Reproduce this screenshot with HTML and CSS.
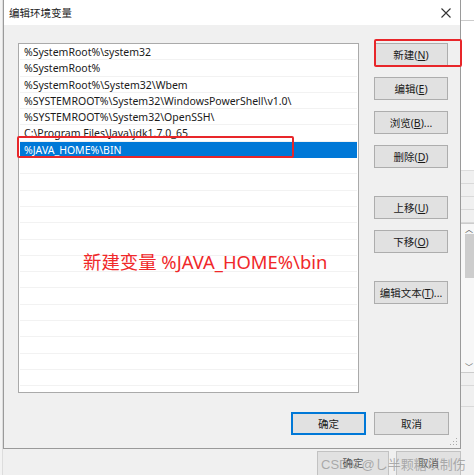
FILE: index.html
```html
<!DOCTYPE html>
<html lang="zh-CN">
<head>
  <meta charset="UTF-8">
  <title>编辑环境变量</title>
  <link rel="stylesheet" href="styles.css">
</head>
<body>

<div class="desktop">
  <div class="edge-left"></div>

  <!-- 对话框 -->
  <div class="dialog">
    <div class="titlebar">
      <span class="title">编辑环境变量</span>
      <svg class="close" width="10" height="10" viewBox="0 0 10 10">
        <path d="M0.5 0.5 L9.5 9.5 M9.5 0.5 L0.5 9.5" stroke="#333" stroke-width="1.1" fill="none"/>
      </svg>
    </div>

    <div class="content">
      <div class="list">
        <div class="row">%SystemRoot%\system32</div>
        <div class="row">%SystemRoot%</div>
        <div class="row">%SystemRoot%\System32\Wbem</div>
        <div class="row">%SYSTEMROOT%\System32\WindowsPowerShell\v1.0\</div>
        <div class="row">%SYSTEMROOT%\System32\OpenSSH\</div>
        <div class="row">C:\Program Files\Java\jdk1.7.0_65</div>
        <div class="row selected">%JAVA_HOME%\BIN</div>
        <div class="row"></div>
        <div class="row"></div>
        <div class="row"></div>
        <div class="row"></div>
        <div class="row"></div>
        <div class="row"></div>
        <div class="row"></div>
        <div class="row"></div>
        <div class="row"></div>
        <div class="row"></div>
        <div class="row"></div>
        <div class="row"></div>
        <div class="row"></div>
        <div class="row"></div>
        <div class="row"></div>

        <div class="note">新建变量 %JAVA_HOME%\bin</div>
      </div>

      <div class="side">
        <button class="btn">新建(<u>N</u>)</button>
        <button class="btn">编辑(<u>E</u>)</button>
        <button class="btn">浏览(<u>B</u>)...</button>
        <button class="btn">删除(<u>D</u>)</button>
        <button class="btn gap">上移(<u>U</u>)</button>
        <button class="btn">下移(<u>O</u>)</button>
        <button class="btn gap">编辑文本(<u>T</u>)...</button>
      </div>
    </div>

    <div class="footer">
      <button class="btn wide default">确定</button>
      <button class="btn wide">取消</button>
    </div>

    <svg class="grip" width="8" height="8" viewBox="0 0 8 8">
      <rect x="6" y="0" width="1" height="1" fill="#aaa"/>
      <rect x="3" y="3" width="1" height="1" fill="#aaa"/>
      <rect x="6" y="3" width="1" height="1" fill="#aaa"/>
      <rect x="0" y="6" width="1" height="1" fill="#aaa"/>
      <rect x="3" y="6" width="1" height="1" fill="#aaa"/>
      <rect x="6" y="6" width="1" height="1" fill="#aaa"/>
    </svg>

    <!-- 标注框 -->
    <div class="mark mark-new"></div>
    <div class="mark mark-row"></div>
  </div>

  <!-- 后面窗口露出的部分 -->
  <div class="edge-right">
    <div class="er-top"></div>
    <div class="er-white"></div>
    <div class="er-line"></div>
    <div class="er-line"></div>
    <div class="er-line"></div>
    <div class="er-line"></div>
    <div class="er-scroll">
      <span class="arrow">︿</span>
      <div class="thumb"></div>
      <span class="arrow down">﹀</span>
    </div>
    <div class="er-line"></div>
    <div class="er-line tall"></div>
  </div>

  <div class="bottom">
    <div class="ghost g1">确定</div>
    <div class="ghost g2">取消</div>
    <div class="watermark">CSDN @し半颗糖以制伤</div>
  </div>
</div>

</body>
</html>
```

FILE: styles.css
```css
body {
  margin: 0;
  padding: 0;
  font-family: "Segoe UI", "Noto Sans", "Noto Sans CJK SC", sans-serif;
  font-size: 10.5px;
  color: #1a1a1a;
}
.desktop {
  position: relative;
  width: 474px;
  height: 475px;
  overflow: hidden;
  background: #f0f0f0;
  display: grid;
  grid-template-columns: 3px 458px 13px;
  grid-template-rows: 449px 26px;
}
.edge-left {
  grid-column: 1;
  grid-row: 1 / 3;
  background: #f3f3f3;
  border-right: 1px solid #ddd;
}
.dialog {
  grid-column: 2;
  grid-row: 1;
  position: relative;
  background: #f0f0f0;
  border: 1px solid #9a9a9a;
  border-top: none;
  box-sizing: border-box;
  display: flex;
  flex-direction: column;
}
.titlebar {
  height: 25px;
  background: #fff;
  display: flex;
  align-items: center;
  justify-content: space-between;
  padding: 0 9px 0 5px;
}
.title {
  font-size: 10.5px;
  color: #222;
}
.close {
  margin-top: 1px;
}
.content {
  display: flex;
  padding: 18px 0 0 14px;
}
.list {
  position: relative;
  width: 341px;
  height: 350px;
  box-sizing: border-box;
  background: #fff;
  border: 1px solid #aaa;
  padding: 0 1px;
  overflow: hidden;
}
.row {
  height: 16.3px;
  line-height: 16px;
  padding-left: 4px;
  box-sizing: border-box;
  border-bottom: 1px solid #f2f2f2;
  white-space: nowrap;
  color: #1a1a1a;
}
.row.selected {
  background: #0078d7;
  color: #fff;
  border-bottom-color: #0078d7;
}
.note {
  position: absolute;
  left: 64px;
  top: 204px;
  font-family: "Segoe UI", "Noto Sans", "Noto Sans CJK SC", sans-serif;
  font-size: 18.4px;
  color: #f0282a;
  white-space: nowrap;
}
.side {
  display: flex;
  flex-direction: column;
  gap: 11px;
  margin-left: 15px;
}
.btn {
  width: 74px;
  height: 23px;
  padding: 0;
  background: #e1e1e1;
  border: 1px solid #adadad;
  font-family: inherit;
  font-size: 10.5px;
  color: #1a1a1a;
}
.btn u {
  text-underline-offset: 1px;
}
.btn.gap {
  margin-top: 17px;
}
.footer {
  display: flex;
  justify-content: flex-end;
  gap: 8px;
  margin-top: 19px;
  padding-right: 11px;
}
.btn.wide {
  width: 75px;
}
.btn.default {
  border: 1px solid #0078d7;
  box-shadow: inset 0 0 0 1px #0078d7;
}
.grip {
  position: absolute;
  right: 2px;
  bottom: 2px;
}
.mark {
  position: absolute;
  border: 2px solid #e8262a;
  border-radius: 2px;
  box-sizing: border-box;
}
.mark-new {
  left: 370px;
  top: 39px;
  width: 88px;
  height: 28px;
}
.mark-row {
  left: 13px;
  top: 136px;
  width: 277px;
  height: 22px;
}
.edge-right {
  grid-column: 3;
  grid-row: 1 / 3;
  display: flex;
  flex-direction: column;
  background: #f0f0f0;
}
.er-top {
  height: 20px;
  background: #fff;
  border-bottom: 1px solid #ccc;
}
.er-white {
  height: 149px;
  background: #fff;
  border-bottom: 1px solid #ddd;
}
.er-line {
  height: 12px;
  border-bottom: 1px solid #d9d9d9;
}
.er-line.tall {
  height: 20px;
}
.er-scroll {
  height: 148px;
  background: #f7f7f7;
  border-top: 1px solid #ccc;
  border-bottom: 1px solid #ccc;
  display: flex;
  flex-direction: column;
  align-items: flex-end;
}
.arrow {
  font-size: 8px;
  line-height: 10px;
  color: #555;
  width: 10px;
  text-align: center;
}
.arrow.down {
  margin-top: auto;
}
.thumb {
  width: 9px;
  height: 44px;
  background: #cdcdcd;
}
.bottom {
  grid-column: 1 / 3;
  grid-row: 2;
  position: relative;
  display: flex;
  align-items: flex-start;
  padding: 2px 0 0 317px;
  gap: 7px;
}
.ghost {
  width: 73px;
  height: 30px;
  box-sizing: border-box;
  background: #e1e1e1;
  border: 1px solid #c2c2c2;
  text-align: center;
  line-height: 22px;
  font-size: 10.5px;
  color: #555;
}
.ghost.g2 {
  width: 66px;
}
.watermark {
  position: absolute;
  left: 321px;
  top: 5px;
  font-family: "Liberation Sans", "Noto Sans CJK SC", sans-serif;
  font-size: 13px;
  color: rgba(150, 150, 150, 0.75);
  white-space: nowrap;
}
```
